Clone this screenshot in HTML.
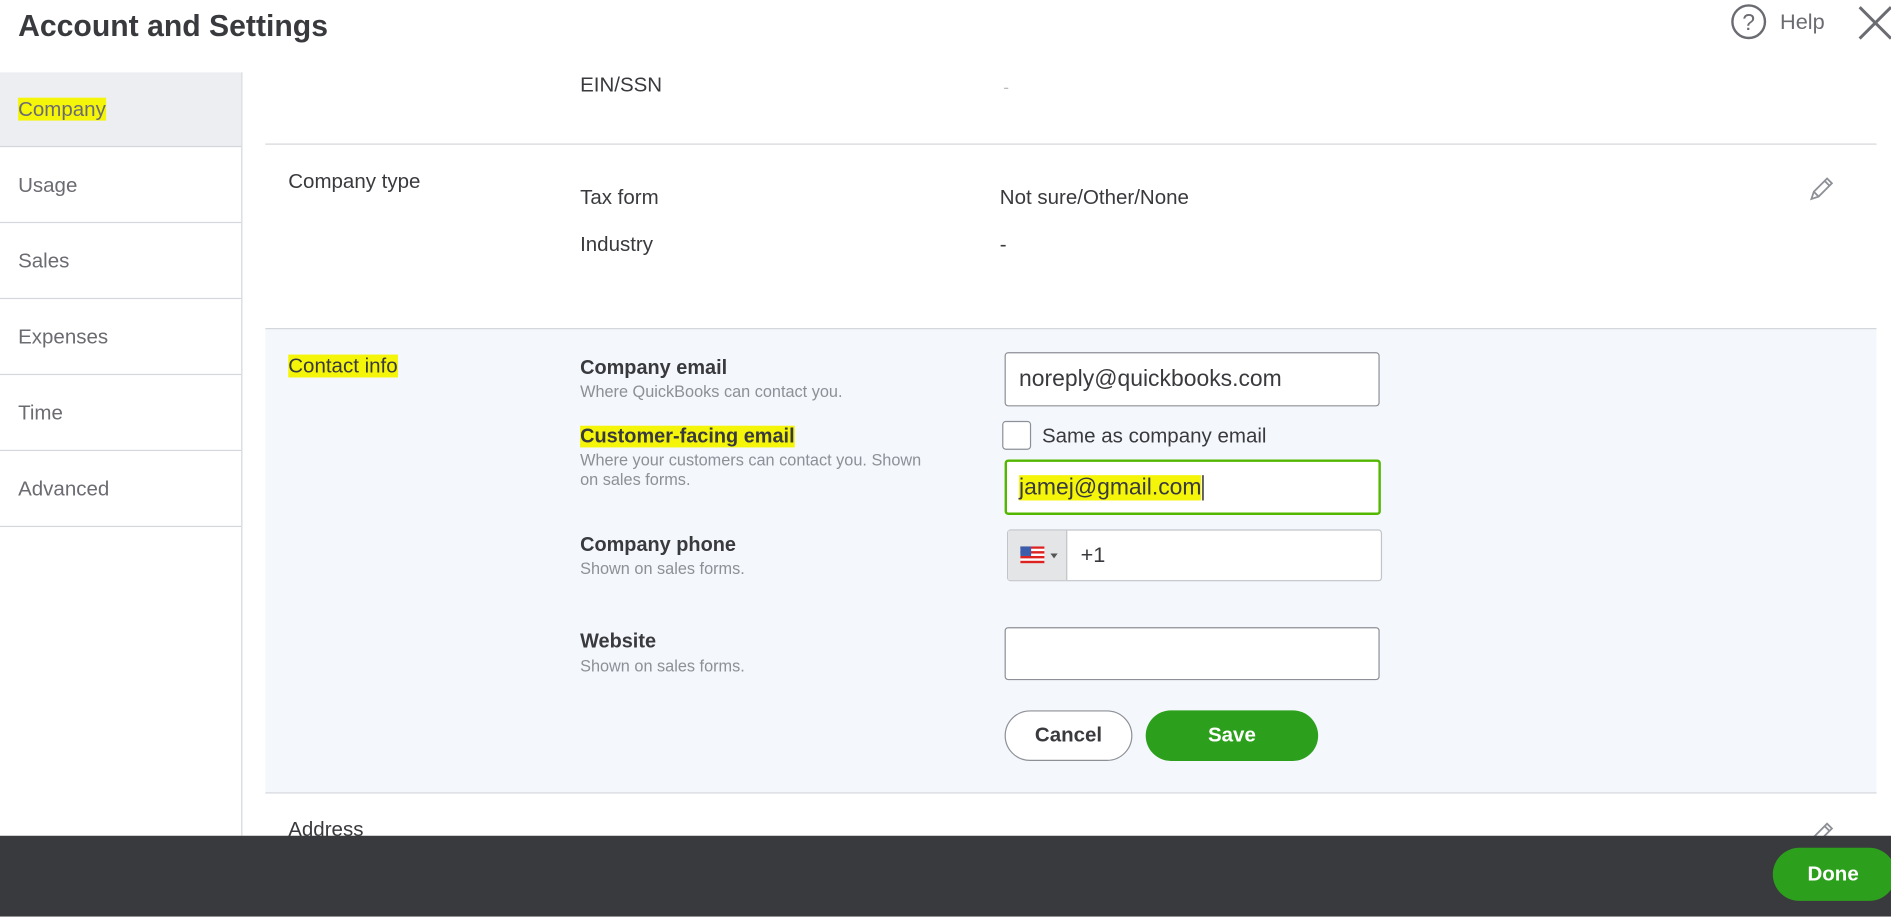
<!DOCTYPE html>
<html><head><meta charset="utf-8"><style>
html,body{margin:0;padding:0;width:1891px;height:887px;overflow:hidden;background:#fff;font-family:"Liberation Sans",Arial,sans-serif;}
#w{position:absolute;left:0;top:0;width:1568px;height:760px;transform:scale(1.20599);transform-origin:0 0;}
.a{position:absolute;white-space:nowrap;}
.hl{background:#f5f50a;}
.side{position:absolute;left:0;width:200px;height:62px;border-bottom:1px solid #d4d7dc;font-size:17px;color:#6b6c72;line-height:62px;padding-left:15px;box-sizing:border-box;}
.lbl{font-size:17px;color:#393a3d;}
.b{font-weight:bold;font-size:16.5px;color:#393a3d;}
.sub{font-size:13.5px;color:#8d9096;line-height:16px;}
.inp{position:absolute;border:1px solid #8d9096;border-radius:3px;background:#fff;box-sizing:border-box;font-size:19px;color:#393a3d;padding-left:11px;}
</style></head><body><div id="w">
<div class="a" style="left:15px;top:8px;font-size:25px;font-weight:bold;color:#393a3d;">Account and Settings</div>
<svg class="a" style="left:1435px;top:3px" width="32" height="32"><circle cx="15" cy="15" r="13.5" fill="none" stroke="#6b6c72" stroke-width="2"/><text x="15" y="22" text-anchor="middle" font-size="19" font-family="Liberation Sans" fill="#6b6c72">?</text></svg>
<div class="a" style="left:1476px;top:8px;font-size:18px;color:#6b6c72;">Help</div>
<svg class="a" style="left:1540px;top:4px" width="30" height="30"><path d="M2 2L28 28M28 2L2 28" stroke="#6b6c72" stroke-width="2.5"/></svg>

<div style="position:absolute;left:200px;top:60px;width:1px;height:633px;background:#d4d7dc"></div>
<div class="side" style="top:60px;background:#eceef1;"><span class="hl">Company</span></div>
<div class="side" style="top:123px">Usage</div>
<div class="side" style="top:186px">Sales</div>
<div class="side" style="top:249px">Expenses</div>
<div class="side" style="top:312px">Time</div>
<div class="side" style="top:375px">Advanced</div>

<div class="a lbl" style="left:481px;top:61px">EIN/SSN</div>
<div class="a" style="left:832px;top:64px;color:#bbb;font-size:14px">-</div>
<div style="position:absolute;left:220px;top:119px;width:1336px;height:1px;background:#d4d7dc"></div>
<div class="a lbl" style="left:239px;top:141px">Company type</div>
<div class="a lbl" style="left:481px;top:154px">Tax form</div>
<div class="a lbl" style="left:829px;top:154px">Not sure/Other/None</div>
<div class="a lbl" style="left:481px;top:193px">Industry</div>
<div class="a lbl" style="left:829px;top:193px">-</div>
<svg class="a" style="left:1499px;top:145px" width="24" height="24"><path d="M3 20L5 14L16 3L20 7L9 18Z M14 5L18 9 M5 14L9 18" fill="none" stroke="#8d9096" stroke-width="1.5"/></svg>

<div style="position:absolute;left:220px;top:272px;width:1336px;height:384px;background:#f4f7fc;border-top:1px solid #d4d7dc;border-bottom:1px solid #d4d7dc;"></div>
<div class="a lbl" style="left:239px;top:294px"><span class="hl">Contact info</span></div>
<div class="a b" style="left:481px;top:296px">Company email</div>
<div class="a sub" style="left:481px;top:317px">Where QuickBooks can contact you.</div>
<div class="inp" style="left:833px;top:292px;width:311px;height:45px;line-height:43px">noreply@quickbooks.com</div>
<div class="a b" style="left:481px;top:353px"><span class="hl">Customer-facing email</span></div>
<div class="a sub" style="left:481px;top:374px">Where your customers can contact you. Shown<br>on sales forms.</div>
<div style="position:absolute;left:831px;top:349px;width:24px;height:24px;border:1px solid #8d9096;border-radius:3px;background:#fff;box-sizing:border-box"></div>
<div class="a lbl" style="left:864px;top:352px">Same as company email</div>
<div class="inp" style="left:833px;top:381px;width:312px;height:46px;line-height:44px;border:2px solid #53b700;padding-left:10px"><span class="hl">jamej@gmail.com</span><span style="border-left:1px solid #000;margin-left:1px"></span></div>
<div class="a b" style="left:481px;top:443px">Company phone</div>
<div class="a sub" style="left:481px;top:464px">Shown on sales forms.</div>
<div class="inp" style="left:835px;top:439px;width:311px;height:43px;line-height:41px;border-color:#c1c4c8;padding-left:60px;font-size:18px">+1</div>
<div style="position:absolute;left:836px;top:440px;width:48px;height:41px;background:#e4e5e7;border-right:1px solid #c1c4c8"></div>
<svg class="a" style="left:846px;top:453px" width="36" height="16"><rect x="0" y="0" width="20" height="14" fill="#fff"/><g fill="#d22"><rect y="0" width="20" height="2"/><rect y="4" width="20" height="2"/><rect y="8" width="20" height="2"/><rect y="12" width="20" height="2"/></g><rect width="9" height="8" fill="#3b5dab"/><path d="M25 6L31 6L28 10Z" fill="#555"/></svg>
<div class="a b" style="left:481px;top:523px">Website</div>
<div class="a sub" style="left:481px;top:545px">Shown on sales forms.</div>
<div class="inp" style="left:833px;top:520px;width:311px;height:44px"></div>
<div class="a" style="left:833px;top:589px;width:106px;height:42px;border:1px solid #8d9096;border-radius:21px;background:#fff;box-sizing:border-box;text-align:center;line-height:40px;font-size:17px;font-weight:bold;color:#393a3d">Cancel</div>
<div class="a" style="left:950px;top:589px;width:143px;height:42px;border-radius:21px;background:#2ca01c;text-align:center;line-height:42px;font-size:17px;font-weight:bold;color:#fff">Save</div>

<div class="a lbl" style="left:239px;top:678px">Address</div>
<svg class="a" style="left:1499px;top:680px" width="24" height="24"><path d="M3 20L5 14L16 3L20 7L9 18Z M14 5L18 9" fill="none" stroke="#8d9096" stroke-width="1.5"/></svg>

<div style="position:absolute;left:0;top:693px;width:1568px;height:67px;background:#393a3d"></div>
<div class="a" style="left:1470px;top:703px;width:100px;height:44px;border-radius:22px;background:#2ca01c;color:#fff;font-weight:bold;font-size:17px;text-align:center;line-height:44px;padding-right:2px">Done</div>
</div></body></html>
